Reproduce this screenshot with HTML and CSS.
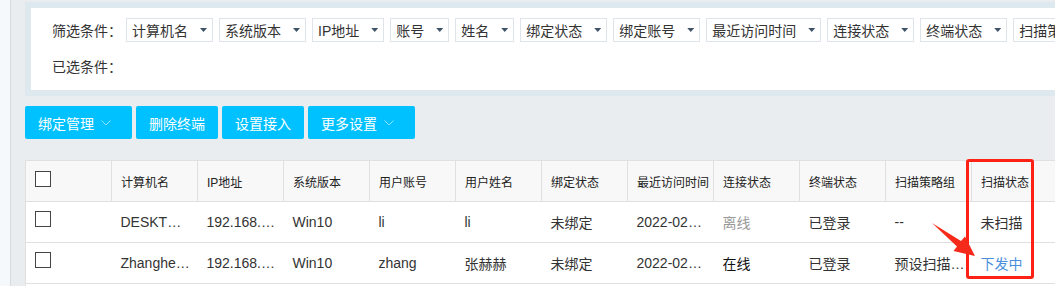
FILE: index.html
```html
<!DOCTYPE html>
<html lang="zh-CN">
<head>
    <meta charset="UTF-8">
    <meta name="viewport" content="width=device-width, initial-scale=1.0">
    <title>终端管理</title>
    <link rel="stylesheet" href="styles.css">
</head>
<body>
    <div class="layout">
        <aside class="sidebar"></aside>

        <main class="content">
            <section class="filter-panel">
                <div class="filter-row">
                    <span class="filter-label">筛选条件：</span>
                    <div class="filter-list">
                        <span class="filter-select">计算机名<i class="caret"></i></span>
                        <span class="filter-select">系统版本<i class="caret"></i></span>
                        <span class="filter-select">IP地址<i class="caret"></i></span>
                        <span class="filter-select">账号<i class="caret"></i></span>
                        <span class="filter-select">姓名<i class="caret"></i></span>
                        <span class="filter-select">绑定状态<i class="caret"></i></span>
                        <span class="filter-select">绑定账号<i class="caret"></i></span>
                        <span class="filter-select">最近访问时间<i class="caret"></i></span>
                        <span class="filter-select">连接状态<i class="caret"></i></span>
                        <span class="filter-select">终端状态<i class="caret"></i></span>
                        <span class="filter-select">扫描策略组<i class="caret"></i></span>
                    </div>
                </div>
                <div class="filter-row">
                    <span class="filter-label">已选条件：</span>
                </div>
            </section>

            <div class="toolbar">
                <button class="btn">绑定管理<svg class="chevron" width="10" height="6" viewBox="0 0 10 6"><polyline points="0.5,0.5 5,5 9.5,0.5"/></svg></button>
                <button class="btn">删除终端</button>
                <button class="btn">设置接入</button>
                <button class="btn">更多设置<svg class="chevron" width="10" height="6" viewBox="0 0 10 6"><polyline points="0.5,0.5 5,5 9.5,0.5"/></svg></button>
            </div>

            <table class="grid">
                <colgroup>
                    <col><col><col><col><col><col><col><col><col><col><col><col>
                </colgroup>
                <thead>
                    <tr>
                        <th class="check-cell"><span class="checkbox"></span></th>
                        <th>计算机名</th>
                        <th>IP地址</th>
                        <th>系统版本</th>
                        <th>用户账号</th>
                        <th>用户姓名</th>
                        <th>绑定状态</th>
                        <th>最近访问时间</th>
                        <th>连接状态</th>
                        <th>终端状态</th>
                        <th>扫描策略组</th>
                        <th>扫描状态</th>
                    </tr>
                </thead>
                <tbody>
                    <tr>
                        <td class="check-cell"><span class="checkbox"></span></td>
                        <td>DESKT…</td>
                        <td>192.168.…</td>
                        <td>Win10</td>
                        <td>li</td>
                        <td>li</td>
                        <td>未绑定</td>
                        <td>2022-02…</td>
                        <td class="status-offline">离线</td>
                        <td>已登录</td>
                        <td>--</td>
                        <td>未扫描</td>
                    </tr>
                    <tr>
                        <td class="check-cell"><span class="checkbox"></span></td>
                        <td>Zhanghe…</td>
                        <td>192.168.…</td>
                        <td>Win10</td>
                        <td>zhang</td>
                        <td>张赫赫</td>
                        <td>未绑定</td>
                        <td>2022-02…</td>
                        <td class="status-online">在线</td>
                        <td>已登录</td>
                        <td>预设扫描…</td>
                        <td class="status-sending">下发中</td>
                    </tr>
                    <tr>
                        <td class="check-cell"></td>
                        <td></td><td></td><td></td><td></td><td></td>
                        <td></td><td></td><td></td><td></td><td></td><td></td>
                    </tr>
                </tbody>
            </table>
        </main>
    </div>

    <!-- annotation over the screenshot -->
    <div class="mark-box"></div>
    <svg class="mark-arrow" width="1055" height="286" viewBox="0 0 1055 286">
        <polygon points="932,223 961,241 965,236.5 975,256 953.5,251 957,246.5"/>
    </svg>
</body>
</html>
```

FILE: styles.css
```css
html, body {
    margin: 0;
    height: 286px;
    overflow: hidden;
}
body {
    font-family: "Liberation Sans", "Noto Sans CJK SC", sans-serif;
    font-size: 14px;
    color: #333;
    background: #e9edf0;
}
.layout {
    display: flex;
    align-items: stretch;
    height: 286px;
}
.sidebar {
    width: 10px;
    flex: none;
    background: #f5f9fc;
    border-right: 1px solid #d6dbe0;
}
.content {
    flex: none;
    width: 1400px;
    padding: 2px 0 0 14px;
}

/* filter panel */
.filter-panel {
    background: #fff;
    border: 6px solid #dde9ef;
    padding: 10px 0 12px 21px;
}
.filter-row {
    display: flex;
    align-items: center;
    height: 24px;
}
.filter-row + .filter-row {
    margin-top: 12px;
}
.filter-label {
    margin-right: 4px;
    color: #333;
}
.filter-list {
    display: flex;
    gap: 6px;
}
.filter-select {
    display: flex;
    align-items: center;
    height: 22px;
    padding: 0 5px;
    border: 1px solid #dfe4ea;
    color: #333;
    white-space: nowrap;
}
.caret {
    flex: none;
    margin-left: 12px;
    width: 7px;
    height: 4px;
    background: #3e5366;
    clip-path: polygon(0 0, 100% 0, 50% 100%);
}

/* toolbar */
.toolbar {
    display: flex;
    gap: 4px;
    margin-top: 10px;
}
.btn {
    display: flex;
    align-items: center;
    height: 33px;
    padding: 0 13px;
    border: none;
    border-radius: 2px;
    background: #00c1ff;
    color: #fff;
    font-family: inherit;
    font-size: 14px;
}
.chevron {
    margin: 0 8px 0 7px;
    fill: none;
    stroke: rgba(255, 255, 255, 0.55);
    stroke-width: 1;
}

/* table */
.grid {
    margin-top: 21px;
    width: 1032px;
    table-layout: fixed;
    border-collapse: collapse;
    background: #fff;
}
.grid col {
    width: 86px;
}
.grid th,
.grid td {
    height: 40px;
    padding: 0 7px 0 9px;
    text-align: left;
    white-space: nowrap;
    overflow: hidden;
    border-bottom: 1px solid #e0e0e0;
}
.grid th {
    background: #f8f8f8;
    font-size: 12px;
    font-weight: normal;
    color: #222;
    border-top: 1px solid #e0e0e0;
    border-left: 1px solid #e0e0e0;
}
.grid td:first-child {
    border-left: 1px solid #e0e0e0;
}
.grid .check-cell {
    vertical-align: top;
    height: 31px;
    padding-top: 9px;
}
.grid th.check-cell {
    height: 30px;
    padding-top: 10px;
}
.checkbox {
    display: block;
    width: 14px;
    height: 14px;
    border: 1px solid #444;
    background: #fff;
}
.status-offline {
    color: #999;
}
.status-online {
    color: #111;
}
.status-sending {
    color: #4a8fdc;
}

/* red annotation */
.mark-box {
    position: absolute;
    left: 966px;
    top: 159px;
    width: 62px;
    height: 114px;
    border: 3px solid #ff2214;
    border-radius: 3px;
}
.mark-arrow {
    position: absolute;
    left: 0;
    top: 0;
    fill: #f52a1a;
}
```
